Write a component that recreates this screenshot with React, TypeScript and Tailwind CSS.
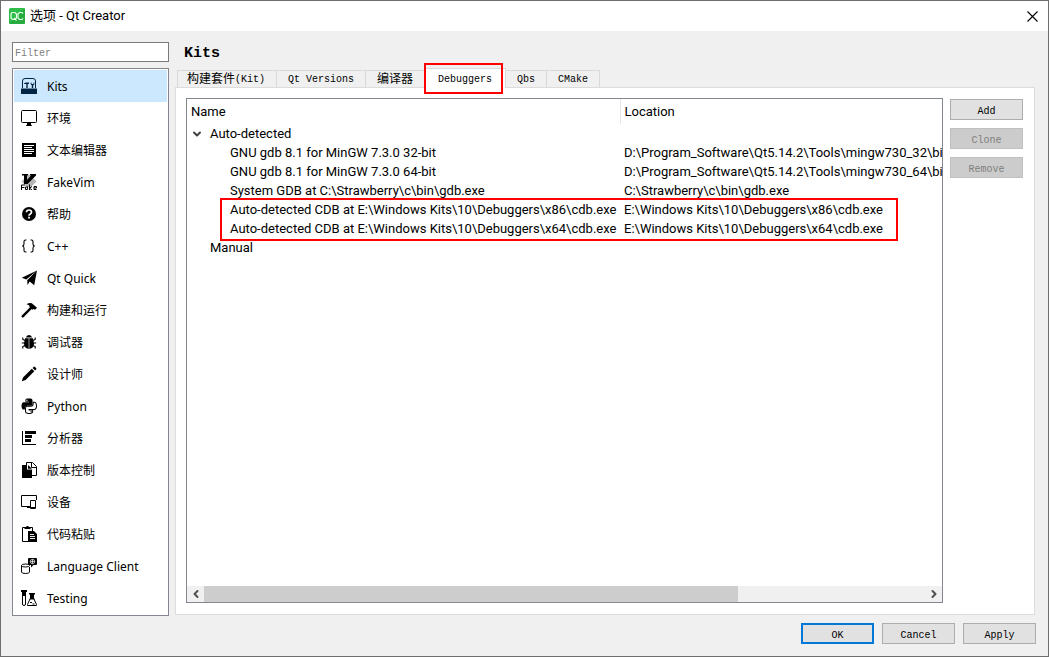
import { useState } from 'react';
import type { ReactNode } from 'react';
import { ChevronDown, ChevronLeft, ChevronRight } from 'lucide-react';
import clsx from 'clsx';

const UI_FONT = "font-['Noto_Sans','Noto_Sans_CJK_SC',sans-serif]";
const TREE_FONT = "font-['Roboto','Noto_Sans_CJK_SC',sans-serif]";
const MONO_FONT = "font-['Liberation_Mono','Noto_Sans_CJK_SC',monospace]";

interface Category {
  id: string;
  label: string;
  icon: ReactNode;
}

interface Debugger {
  name: string;
  location: string;
}

const PYTHON_TOP =
  'M167.8 248.1h106.8c29.7 0 53.4-24.5 53.4-54.3V91.9c0-29-24.4-50.7-53.4-55.6-35.8-5.9-74.7-5.6-106.8.1-45.2 8-53.4 24.7-53.4 55.6v40.7h106.9v13.6h-147c-31.1 0-58.3 18.7-66.8 54.2-9.8 40.7-10.2 66.1 0 108.6 7.6 31.6 25.7 54.2 56.8 54.2H101v-48.8c0-35.3 30.5-66.4 66.8-66.4zm-6.7-142.6c-11.1 0-20.1-9.1-20.1-20.3.1-11.3 9-20.4 20.1-20.4 11 0 20.1 9.2 20.1 20.4s-9 20.3-20.1 20.3z';
const PYTHON_BOTTOM =
  'M439.8 200.5c-7.7-30.9-22.3-54.2-53.4-54.2h-40.1v47.4c0 36.8-31.2 67.8-66.8 67.8H172.7c-29.2 0-53.4 25-53.4 54.3v101.8c0 29 25.2 46 53.4 54.3 33.8 9.9 66.3 11.7 106.8 0 26.9-7.8 53.4-23.5 53.4-54.3v-40.7H226.2v-13.6h160.2c31.1 0 42.6-21.7 53.4-54.2 11.2-33.5 10.7-65.7 0-108.6z';

const categories: Category[] = [
  {
    id: 'kits',
    label: 'Kits',
    icon: (
      <>
        <path d="M0 10.5h16V16H0z" />
        <path d="M1.5 10V3Q1.5.5 4 .5h8q2.500 0 2.500 2.500v7" fill="none" stroke="currentColor" />
        <path d="M3 5.500Q4 4.500 5.500 4.500H8V6H6.700V10H5.300V6H3zM9.700 4.500v1.500q0 1 1.100 1.300V10h1.400V7.300q1.100-.3 1.100-1.300V4.500h-.8V6h-2V4.500z" />
      </>
    ),
  },
  {
    id: 'environment',
    label: '环境',
    icon: (
      <>
        <rect x="0.5" y="0.5" width="15" height="12" rx="1" fill="none" stroke="currentColor" />
        <path d="M6 13h4v1.500l1.200 1.500H4.800L6 14.500z" />
      </>
    ),
  },
  {
    id: 'editor',
    label: '文本编辑器',
    icon: (
      <>
        <path d="M1 1h14v14H1z" />
        <path d="M3 3.500h10M3 5.500h8M3 7.500h10M3 9.500h10M3 11.500h8" stroke="#fff" />
      </>
    ),
  },
  {
    id: 'fakevim',
    label: 'FakeVim',
    icon: (
      <>
        <path d="M8 0l7.500 7.500L10 13H6L.5 7.500z" fill="#b5b5b5" />
        <path d="M1 0h6v1.500H6v4.500l4-4.500H9V0h6v1.500L6.500 10H3V1.500H1z" />
        <path d="M.5 16v-5H4M.5 13.500h3M6.500 13H4.500v2.500h2v-3M8.500 10.500V16M11 12.500l-2.500 1.700L11 16M15.500 15.500h-2.500v-3h2.500V14h-2.500" fill="none" stroke="currentColor" />
      </>
    ),
  },
  {
    id: 'help',
    label: '帮助',
    icon: (
      <>
        <circle cx="8" cy="8" r="7" />
        <path d="M5.500 6.300Q5.500 4 8 4t2.500 2.200q0 1-1.200 1.700T8 9.800" fill="none" stroke="#fff" strokeWidth="1.700" />
        <path d="M7.100 10.800h1.800v1.800H7.100z" fill="#fff" />
      </>
    ),
  },
  {
    id: 'cpp',
    label: 'C++',
    icon: (
      <path
        d="M5.500 2H4.500Q3 2 3 3.500v2.500Q3 8 1.200 8 3 8 3 10v2.500Q3 14 4.500 14h1M9.500 2h1Q12 2 12 3.500v2.500Q12 8 13.800 8 12 8 12 10v2.500q0 1.500-1.500 1.500h-1"
        fill="none"
        stroke="currentColor"
        strokeWidth="1.100"
      />
    ),
  },
  {
    id: 'quick',
    label: 'Qt Quick',
    icon: <path d="M16 .5L.8 7.800 5.300 9.600zM16 .5L6.200 10.200l.3 4.800 2.200-3.400 4.500 3.700z" />,
  },
  {
    id: 'build',
    label: '构建和运行',
    icon: (
      <>
        <path d="M1.700 14.300L10.300 5.700" stroke="currentColor" strokeWidth="2.400" strokeLinecap="round" />
        <path d="M5.500 2.300Q8 .5 10.800 1.200L16 5.800l-2 2-1.500-.7-1.300.6L8.500 5q.3-2-3-2.700z" />
      </>
    ),
  },
  {
    id: 'debugger',
    label: '调试器',
    icon: (
      <>
        <path d="M5 3.500Q5.300 1 8 1t3 2.500zM4 4.300h3.700V15Q3 14 3 9.500zM8.300 4.300H12l1 5.200q0 4.500-4.700 5.500z" />
        <path d="M4 6.500L1.800 5.500V3.500M4 9H.8M4 11.500l-2.200 1v2M12 6.500l2.200-1v-2M12 9h3.200M12 11.500l2.200 1v2" fill="none" stroke="currentColor" strokeWidth="1.100" />
      </>
    ),
  },
  {
    id: 'designer',
    label: '设计师',
    icon: <path d="M.8 15.200l1.200-3.800L10.800 2.700l2.500 2.500L4.600 13.900zM11.600 1.900l1-1q.7-.6 1.400 0l1.100 1.100q.6.7 0 1.400l-1 1z" />,
  },
  {
    id: 'python',
    label: 'Python',
    icon: (
      <g transform="scale(.0335) translate(16 -18)">
        <path d={PYTHON_TOP} />
        <path d={PYTHON_BOTTOM} fill="none" stroke="currentColor" strokeWidth="30" />
        <circle cx="286" cy="424" r="20" />
      </g>
    ),
  },
  {
    id: 'analyzer',
    label: '分析器',
    icon: <path d="M1 1h1v13h13v1H1zM4 1h11v3H4zM4 5h7v3H4zM4 9h6v3H4z" />,
  },
  {
    id: 'vcs',
    label: '版本控制',
    icon: (
      <>
        <path d="M5.500 3V.5h6l4 4v9H11" fill="none" stroke="currentColor" />
        <path d="M10.500 1v4.500H15" fill="none" stroke="currentColor" />
        <path d="M1 3h5v4.500h5V16H1zM7 3l4 3.700H7z" />
      </>
    ),
  },
  {
    id: 'devices',
    label: '设备',
    icon: (
      <>
        <path d="M9 12.500H.5v-11h15V6" fill="none" stroke="currentColor" />
        <path d="M9.500 6.500h5v8h-5z" fill="none" stroke="currentColor" />
        <path d="M6 12h3v2H6zM10 13h4v1h-4z" />
      </>
    ),
  },
  {
    id: 'paste',
    label: '代码粘贴',
    icon: (
      <>
        <path d="M7 15.500H1.500v-14h10V5" fill="none" stroke="currentColor" />
        <path d="M3.500 1H5q.3-1 1.500-1T8 1h1.500v2h-6zM7 5h6l3 3v8H7z" />
        <path d="M9 8.500h4M9 10.500h5M9 12.500h5" stroke="#fff" strokeWidth=".9" />
      </>
    ),
  },
  {
    id: 'lsp',
    label: 'Language Client',
    icon: (
      <>
        <path d="M.5 7.500v6.500q0 1.500 4 1.500t4-1.500V9M.5 7.500Q.5 6 4.500 6t4 1.500T4.500 9t-4-1.500" fill="none" stroke="currentColor" />
        <path d="M8 0h7q1 0 1 1v5q0 1-1 1h-2.500L10 9.500V7H8Q7 7 7 6V1q0-1 1-1z" />
        <circle cx="11.500" cy="3.500" r="2.200" fill="none" stroke="#fff" strokeWidth=".7" />
        <path d="M9.300 3.500h4.400M11.500 1.300v4.400" stroke="#fff" strokeWidth=".7" />
      </>
    ),
  },
  {
    id: 'testing',
    label: 'Testing',
    icon: (
      <>
        <path d="M0 0h6v2H0zM1 2h4v4H1zM8 3h6v1.500H8z" />
        <path d="M1.500 2v12Q1.500 15.500 3 15.500T4.500 14V2M9.500 4v4l-3 6.500v1h9v-1l-3-6.500V4" fill="none" stroke="currentColor" />
        <path d="M9 4h4v4l.5 1.500h-5L9.500 8zM9 12h2v1H9zM11.500 13.500h2v1h-2z" />
      </>
    ),
  },
];

const tabs = ['构建套件(Kit)', 'Qt Versions', '编译器', 'Debuggers', 'Qbs', 'CMake'];

const debuggers: Debugger[] = [
  {
    name: 'GNU gdb 8.1 for MinGW 7.3.0 32-bit',
    location: 'D:\\Program_Software\\Qt5.14.2\\Tools\\mingw730_32\\bin',
  },
  {
    name: 'GNU gdb 8.1 for MinGW 7.3.0 64-bit',
    location: 'D:\\Program_Software\\Qt5.14.2\\Tools\\mingw730_64\\bin',
  },
  { name: 'System GDB at C:\\Strawberry\\c\\bin\\gdb.exe', location: 'C:\\Strawberry\\c\\bin\\gdb.exe' },
  {
    name: 'Auto-detected CDB at E:\\Windows Kits\\10\\Debuggers\\x86\\cdb.exe',
    location: 'E:\\Windows Kits\\10\\Debuggers\\x86\\cdb.exe',
  },
  {
    name: 'Auto-detected CDB at E:\\Windows Kits\\10\\Debuggers\\x64\\cdb.exe',
    location: 'E:\\Windows Kits\\10\\Debuggers\\x64\\cdb.exe',
  },
];

function TitleBar() {
  return (
    <header className="flex h-[30px] items-center bg-white pr-[10px] pl-2">
      <svg viewBox="0 0 16 16" className="h-4 w-4">
        <rect width="16" height="16" rx="1.500" fill="#2fbd49" />
        <path d="M0 16L16 0v14.500q0 1.500-1.500 1.500z" fill="#25ab3e" />
        <path
          d="M3 4.500h3l1.500 1.500v4L6 11.500H3.500L2 10V6zM5 10l2.500 2.700M14 5.500l-1-1h-2.500L9 6v4l1.500 1.500H13l1-1"
          fill="none"
          stroke="#e6ffe9"
          strokeWidth="1.200"
        />
      </svg>
      <h1 className={clsx('ml-[5px] flex-1 text-[13px]', TREE_FONT)}>
        <span className="text-[13px]">选项</span> - Qt Creator
      </h1>
      <button type="button" aria-label="Close">
        <svg viewBox="0 0 11 11" className="h-[11px] w-[11px]">
          <path d="M.5.500l10 10M10.500.500l-10 10" stroke="#000" strokeWidth="1.100" />
        </svg>
      </button>
    </header>
  );
}

function PushButton({ label, primary, disabled }: { label: string; primary?: boolean; disabled?: boolean }) {
  return (
    <button
      type="button"
      disabled={disabled}
      className={clsx(
        'h-[21px] w-[73px] pt-[5px] text-center text-[10px] leading-3',
        MONO_FONT,
        primary && 'border-2 border-[#0078d7] bg-[#e1e1e1]',
        disabled && 'border border-[#bfbfbf] bg-[#cccccc] text-[#808080]',
        !primary && !disabled && 'border border-[#adadad] bg-[#e1e1e1]'
      )}
    >
      {label}
    </button>
  );
}

function DebuggerTree() {
  return (
    <div className="relative flex min-w-0 flex-1 flex-col border border-[#828790] bg-white">
      <div className="flex-1 overflow-hidden">
        <table
          className={clsx(
            'w-full table-fixed border-collapse text-left text-[13px] whitespace-nowrap',
            TREE_FONT
          )}
        >
          <thead>
            <tr className="h-[25px]">
              <th className="w-[433px] border-r border-[#e5e5e5] pl-1 font-normal">Name</th>
              <th className="pl-1 font-normal">Location</th>
            </tr>
          </thead>
          <tbody>
            <tr className="h-[19px]">
              <td colSpan={2}>
                <button type="button" className="flex items-center gap-[7px] pl-1 leading-4">
                  <ChevronDown className="h-3 w-3 text-[#404040]" strokeWidth={4} />
                  Auto-detected
                </button>
              </td>
            </tr>
            {debuggers.map((item) => (
              <tr key={item.name} className="h-[19px]">
                <td className="pl-[43px] leading-4">{item.name}</td>
                <td className="overflow-hidden pl-1 leading-4">{item.location}</td>
              </tr>
            ))}
            <tr className="h-[19px]">
              <td colSpan={2} className="pl-[23px] leading-4">
                Manual
              </td>
            </tr>
          </tbody>
        </table>
      </div>
      <div className="absolute top-[99px] left-[33px] h-[43px] w-[678px] border-2 border-[#ff0000]" />
      <div className="flex h-4 bg-[#f0f0f0] text-[#505050]">
        <button type="button" aria-label="Scroll left" className="flex w-[17px] items-center justify-center">
          <ChevronLeft className="h-3 w-3" strokeWidth={4} />
        </button>
        <div className="flex-1">
          <div className="h-full w-[74%] bg-[#cdcdcd]" />
        </div>
        <button type="button" aria-label="Scroll right" className="flex w-[17px] items-center justify-center">
          <ChevronRight className="h-3 w-3" strokeWidth={4} />
        </button>
      </div>
    </div>
  );
}

export default function App() {
  const [category, setCategory] = useState('kits');
  const [tab, setTab] = useState('Debuggers');
  const [filter, setFilter] = useState('');

  return (
    <div className={clsx('flex min-h-screen flex-col border border-[#6e6e6e] bg-[#f0f0f0] text-black', UI_FONT)}>
      <TitleBar />

      <div className="flex flex-1 gap-[7px] pt-[11px] pr-[13px] pl-[11px]">
        <aside className="flex w-[157px] shrink-0 flex-col gap-[6px]">
          <input
            type="text"
            aria-label="Filter"
            placeholder="Filter"
            value={filter}
            onChange={(e) => setFilter(e.target.value)}
            className={clsx(
              'h-5 w-full border border-[#7a7a7a] bg-white px-[2px] pt-[2px] text-[10px] placeholder:text-[#808080]',
              MONO_FONT
            )}
          />
          <nav className="flex-1 border border-[#828790] bg-white p-px">
            {categories.map((item) => (
              <button
                key={item.id}
                type="button"
                onClick={() => setCategory(item.id)}
                className={clsx(
                  'flex h-8 w-full items-center gap-[10px] pl-[7px] text-left text-xs',
                  category === item.id && 'bg-[#cce8ff]'
                )}
              >
                <svg
                  viewBox="0 0 16 16"
                  fill="currentColor"
                  className={clsx('h-4 w-4', category === item.id && 'text-[#002442]')}
                >
                  {item.icon}
                </svg>
                <span className="pt-[2px]">{item.label}</span>
              </button>
            ))}
          </nav>
        </aside>

        <main className="-ml-px flex min-w-0 flex-1 flex-col pb-px">
          <h2 className={clsx('h-[26px] pl-[9px] text-[15px] leading-6 font-bold', MONO_FONT)}>Kits</h2>
          <div className={clsx('z-10 flex items-end pl-[2px] text-[10px]', MONO_FONT)} role="tablist">
            {tabs.map((name, i) => {
              const active = tab === name;
              return (
                <button
                  key={name}
                  type="button"
                  role="tab"
                  aria-selected={active}
                  onClick={() => setTab(name)}
                  className={clsx(
                    'relative flex items-center border-t border-r border-[#d9d9d9] pt-[2px] leading-4',
                    i === 0 ? 'border-l pr-[11px] pl-[9px]' : !active && 'px-[11px]',
                    active ? '-mb-px h-5 bg-white px-[13px]' : 'h-[17px]'
                  )}
                >
                  {name.split(/([\u4e00-\u9fff]+)/).map((part, n) => (
                    <span key={n} className={clsx('whitespace-pre', n % 2 && 'text-xs')}>
                      {part}
                    </span>
                  ))}
                  {active && <span className="absolute -top-[6px] -left-px h-[31px] w-[79px] border-2 border-[#ff0000]" />}
                </button>
              );
            })}
          </div>
          <section className="flex flex-1 gap-[7px] border border-[#dcdcdc] bg-white pt-[10px] pr-[11px] pb-[11px] pl-[10px]">
            <DebuggerTree />
            <div className="flex flex-col gap-2 pt-px">
              <PushButton label="Add" />
              <PushButton label="Clone" disabled />
              <PushButton label="Remove" disabled />
            </div>
          </section>
        </main>
      </div>

      <footer className="flex justify-end gap-2 pt-[7px] pr-3 pb-3">
        <PushButton label="OK" primary />
        <PushButton label="Cancel" />
        <PushButton label="Apply" />
      </footer>
    </div>
  );
}
